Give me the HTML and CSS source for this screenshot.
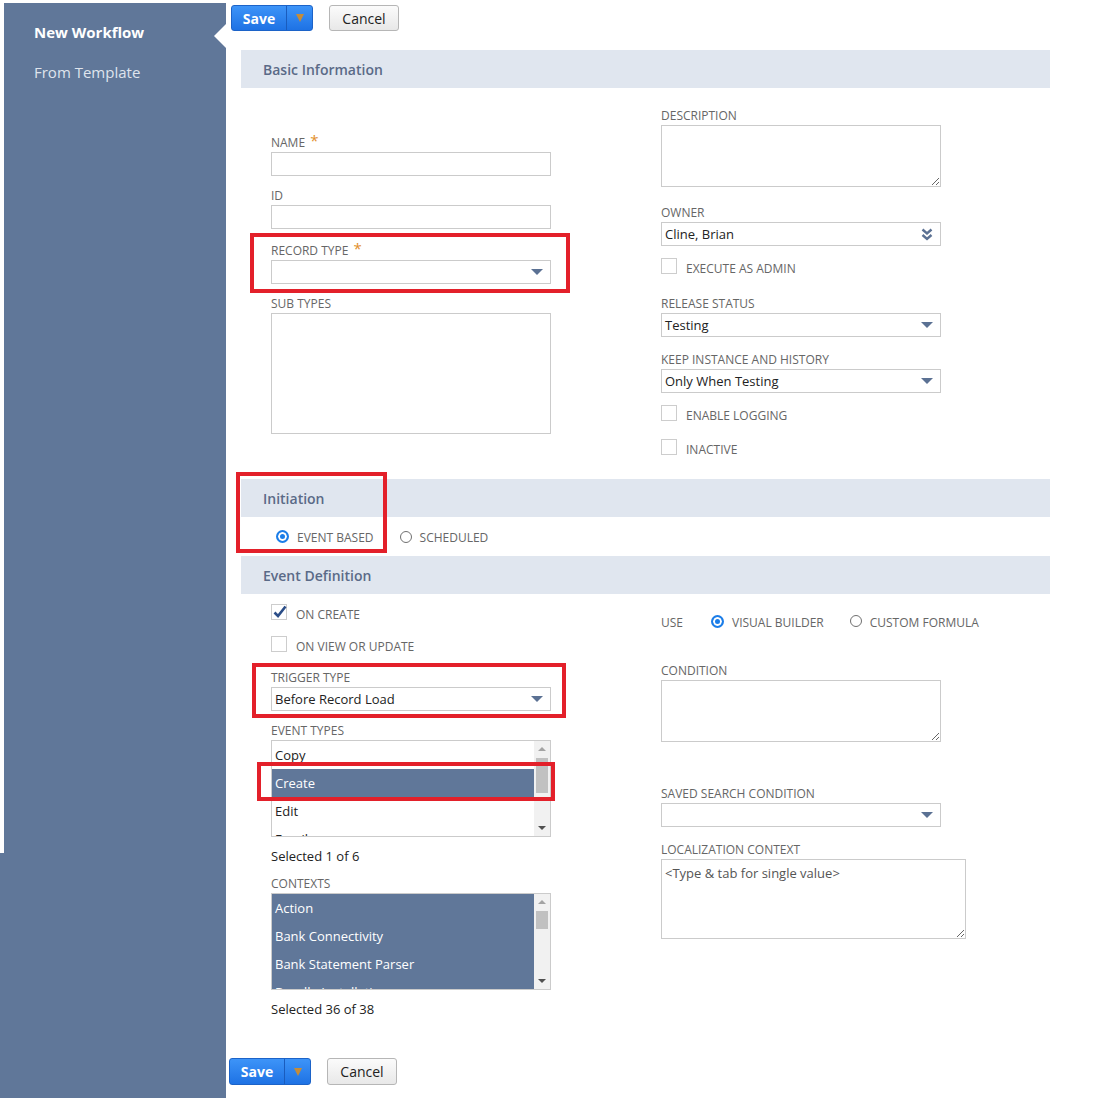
FILE: index.html
```html
<!DOCTYPE html>
<html lang="en">
<head>
  <meta charset="UTF-8">
  <meta name="viewport" content="width=device-width, initial-scale=1.0">
  <title>New Workflow</title>
  <link rel="stylesheet" href="styles.css">
</head>
<body>

<div class="page">
  <!-- Sidebar -->
  <aside class="sidebar">
    <nav class="side-nav">
      <a class="side-link active">New Workflow</a>
      <a class="side-link">From Template</a>
    </nav>
    <div class="side-fill"></div>
  </aside>

  <main class="main">
    <div class="btn-row">
      <div class="btn-split">
        <button class="btn-save">Save</button>
        <button class="btn-menu"><span class="caret"></span></button>
      </div>
      <button class="btn-cancel">Cancel</button>
    </div>

    <!-- Basic Information -->
    <section class="section">
      <div class="section-head">Basic Information</div>
      <div class="form-grid basic">
        <div class="col col-left">
          <div class="field">
            <label class="lbl req-lbl">NAME <span class="req">*</span></label>
            <input type="text" class="txt">
          </div>
          <div class="field">
            <label class="lbl">ID</label>
            <input type="text" class="txt">
          </div>
          <div class="field">
            <label class="lbl req-lbl">RECORD TYPE <span class="req">*</span></label>
            <div class="select"><span class="value"></span><span class="arrow"></span></div>
          </div>
          <div class="field">
            <label class="lbl">SUB TYPES</label>
            <div class="multi"></div>
          </div>
        </div>

        <div class="col col-right">
          <div class="field area-field">
            <label class="lbl">DESCRIPTION</label>
            <textarea class="area"></textarea>
          </div>
          <div class="field">
            <label class="lbl">OWNER</label>
            <div class="select">
              <span class="value">Cline, Brian</span>
              <svg class="chevrons" width="12" height="13" viewBox="0 0 12 13">
                <path d="M1.5 1.5 L6 5.5 L10.5 1.5" fill="none" stroke="#5b7193" stroke-width="2.4"/>
                <path d="M1.5 7 L6 11 L10.5 7" fill="none" stroke="#5b7193" stroke-width="2.4"/>
              </svg>
            </div>
          </div>
          <div class="check-row loose">
            <span class="check"></span>
            <span class="check-text">EXECUTE AS ADMIN</span>
          </div>
          <div class="field spaced">
            <label class="lbl">RELEASE STATUS</label>
            <div class="select"><span class="value">Testing</span><span class="arrow"></span></div>
          </div>
          <div class="field">
            <label class="lbl">KEEP INSTANCE AND HISTORY</label>
            <div class="select"><span class="value">Only When Testing</span><span class="arrow"></span></div>
          </div>
          <div class="check-row">
            <span class="check"></span>
            <span class="check-text">ENABLE LOGGING</span>
          </div>
          <div class="check-row">
            <span class="check"></span>
            <span class="check-text">INACTIVE</span>
          </div>
        </div>
      </div>
    </section>

    <!-- Initiation -->
    <section class="section">
      <div class="section-head">Initiation</div>
      <div class="radio-row init">
        <span class="radio on"></span><span class="radio-text">EVENT BASED</span>
        <span class="radio"></span><span class="radio-text">SCHEDULED</span>
      </div>
    </section>

    <!-- Event Definition -->
    <section class="section">
      <div class="section-head">Event Definition</div>
      <div class="form-grid event">
        <div class="col col-left">
          <div class="check-row tight">
            <span class="check checked">
              <svg width="16" height="16" viewBox="0 0 16 16"><path d="M2.5 8.5 L6 12 L13.5 2.5" fill="none" stroke="#2b4d87" stroke-width="2.6"/></svg>
            </span>
            <span class="check-text">ON CREATE</span>
          </div>
          <div class="check-row">
            <span class="check"></span>
            <span class="check-text">ON VIEW OR UPDATE</span>
          </div>
          <div class="field">
            <label class="lbl">TRIGGER TYPE</label>
            <div class="select"><span class="value">Before Record Load</span><span class="arrow"></span></div>
          </div>
          <div class="field list-field">
            <label class="lbl">EVENT TYPES</label>
            <div class="listbox">
              <div class="list-items">
                <div class="item">Copy</div>
                <div class="item selected">Create</div>
                <div class="item">Edit</div>
                <div class="item">Email</div>
              </div>
              <div class="scrollbar">
                <span class="sb-up"></span>
                <span class="sb-thumb event-thumb"></span>
                <span class="sb-down"></span>
              </div>
            </div>
            <p class="note">Selected 1 of 6</p>
          </div>
          <div class="field list-field">
            <label class="lbl">CONTEXTS</label>
            <div class="listbox">
              <div class="list-items">
                <div class="item selected">Action</div>
                <div class="item selected">Bank Connectivity</div>
                <div class="item selected">Bank Statement Parser</div>
                <div class="item selected">Bundle Installation</div>
              </div>
              <div class="scrollbar">
                <span class="sb-up"></span>
                <span class="sb-thumb ctx-thumb"></span>
                <span class="sb-down"></span>
              </div>
            </div>
            <p class="note">Selected 36 of 38</p>
          </div>
        </div>

        <div class="col col-right">
          <div class="radio-row use">
            <span class="use-lbl">USE</span>
            <span class="radio on"></span><span class="radio-text">VISUAL BUILDER</span>
            <span class="radio"></span><span class="radio-text">CUSTOM FORMULA</span>
          </div>
          <div class="field cond-field">
            <label class="lbl">CONDITION</label>
            <textarea class="area"></textarea>
          </div>
          <div class="field spaced">
            <label class="lbl">SAVED SEARCH CONDITION</label>
            <div class="select"><span class="value"></span><span class="arrow"></span></div>
          </div>
          <div class="field">
            <label class="lbl">LOCALIZATION CONTEXT</label>
            <textarea class="area wide">&lt;Type &amp; tab for single value&gt;</textarea>
          </div>
        </div>
      </div>
    </section>

    <div class="btn-row bottom">
      <div class="btn-split">
        <button class="btn-save">Save</button>
        <button class="btn-menu"><span class="caret"></span></button>
      </div>
      <button class="btn-cancel">Cancel</button>
    </div>
  </main>

  <!-- Highlight annotations -->
  <div class="mark mark-record"></div>
  <div class="mark mark-init"></div>
  <div class="mark mark-trigger"></div>
  <div class="mark mark-create"></div>
</div>

</body>
</html>
```

FILE: styles.css
```css
/* Basic Styles */
* {
  box-sizing: border-box;
}
body {
  font-family: "Open Sans", Arial, sans-serif;
  margin: 0;
  padding: 0;
  background-color: #fff;
  color: #222;
}
.page {
  position: relative;
  display: flex;
  min-height: 1098px;
}

/* Sidebar */
.sidebar {
  width: 226px;
  flex-shrink: 0;
  display: flex;
  flex-direction: column;
}
.side-nav {
  margin: 3px 0 0 4px;
  height: 850px;
  padding-top: 9px;
  background-color: #607799;
}
.side-link {
  position: relative;
  display: block;
  padding-left: 30px;
  font-size: 15px;
  line-height: 40px;
  color: #dfe4ed;
}
.side-link.active {
  color: #fff;
  font-weight: 700;
}
.side-link.active::after {
  content: "";
  position: absolute;
  right: 0;
  top: 12px;
  border-top: 12px solid transparent;
  border-bottom: 12px solid transparent;
  border-right: 12px solid #fff;
}
.side-fill {
  flex: 1;
  background-color: #607799;
}

/* Main */
.main {
  flex: 1;
  padding-top: 5px;
}
.btn-row {
  display: flex;
  gap: 16px;
  margin-left: 5px;
}
.btn-row.bottom {
  margin: 29px 0 0 3px;
}
.btn-split {
  display: flex;
  width: 82px;
  height: 26px;
  border: 1px solid #1c63c8;
  border-radius: 3px;
  overflow: hidden;
  background: linear-gradient(#3d94f8, #1e72e4);
}
.bottom .btn-split,
.bottom .btn-cancel {
  height: 27px;
}
.btn-save {
  width: 55px;
  border: none;
  border-right: 1px solid #1a5cbd;
  background: transparent;
  color: #fff;
  font-family: inherit;
  font-size: 14px;
  font-weight: 700;
  padding: 0;
}
.btn-menu {
  flex: 1;
  border: none;
  background: transparent;
  padding: 0;
  display: flex;
  align-items: center;
  justify-content: center;
}
.caret {
  border-left: 4px solid transparent;
  border-right: 4px solid transparent;
  border-top: 8px solid #c48c3a;
}
.btn-cancel {
  width: 70px;
  height: 26px;
  border: 1px solid #b6b6b6;
  border-radius: 3px;
  background: linear-gradient(#fbfbfb, #e8e8e8);
  color: #222;
  font-family: inherit;
  font-size: 14px;
  padding: 0;
}

/* Sections */
.section {
  margin-left: 15px;
  width: 809px;
}
.section:first-of-type {
  margin-top: 19px;
}
.section-head {
  height: 38px;
  line-height: 40px;
  padding-left: 22px;
  background-color: #e0e6ef;
  color: #5a6a87;
  font-size: 14px;
  font-weight: 600;
}
.form-grid {
  display: grid;
  grid-template-columns: 390px 1fr;
  padding-left: 30px;
}
.col > :last-child {
  margin-bottom: 0;
}
.basic {
  padding-bottom: 20px;
}
.basic .col-left {
  padding-top: 45px;
}
.basic .col-right {
  padding-top: 20px;
}
.event .col-left {
  padding-top: 10px;
}
.event .col-right {
  padding-top: 18px;
}

/* Fields */
.field {
  margin-bottom: 12px;
}
.field.spaced {
  margin-bottom: 15px;
}
.field.area-field {
  margin-bottom: 18px;
}
.field.cond-field {
  margin-bottom: 44px;
}
.field.list-field {
  margin-bottom: 0;
}
.lbl {
  display: block;
  height: 16px;
  line-height: 16px;
  margin-bottom: 1px;
  font-size: 12px;
  color: #666;
}
.lbl.req-lbl {
  height: 18px;
  line-height: 20px;
}
.req {
  color: #e28f2c;
  font-size: 15px;
  vertical-align: top;
  line-height: 14px;
  margin-left: 2px;
}
.txt,
.select,
.multi,
.area,
.listbox {
  display: block;
  width: 280px;
  border: 1px solid #cbcbcb;
  background-color: #fff;
}
.txt {
  height: 24px;
}
.select {
  position: relative;
  height: 24px;
  padding-left: 3px;
  font-size: 13px;
  line-height: 23px;
  color: #222;
}
.arrow {
  position: absolute;
  right: 7px;
  top: 8px;
  border-left: 6px solid transparent;
  border-right: 6px solid transparent;
  border-top: 6px solid #5b7193;
}
.chevrons {
  position: absolute;
  right: 7px;
  top: 5px;
}
.multi {
  height: 121px;
}
.area {
  height: 62px;
  padding: 4px 3px;
  font-family: inherit;
  font-size: 13px;
  line-height: 18px;
  color: #555;
  resize: both;
  margin: 0;
}
.area.wide {
  width: 305px;
  height: 80px;
}

/* Checkboxes */
.check-row {
  display: flex;
  height: 20px;
  margin-bottom: 14px;
}
.check-row.loose {
  margin-bottom: 18px;
}
.check-row.tight {
  margin-bottom: 12px;
}
.check {
  width: 16px;
  height: 16px;
  border: 1px solid #cdcdcd;
  background-color: #fff;
  position: relative;
}
.check svg {
  position: absolute;
  left: 0;
  top: -1px;
}
.check-text {
  margin: 3px 0 0 9px;
  font-size: 12px;
  line-height: 16px;
  color: #666;
}

/* Radios */
.radio-row {
  display: flex;
  align-items: center;
  font-size: 12px;
  color: #666;
}
.radio-row.init {
  height: 39px;
  padding: 2px 0 0 35px;
}
.radio-row.use {
  height: 20px;
  margin-bottom: 31px;
}
.use-lbl {
  width: 50px;
}
.radio {
  width: 12px;
  height: 12px;
  border-radius: 50%;
  border: 1px solid #707070;
  background-color: #fff;
  margin-top: -2px;
}
.radio.on {
  width: 13px;
  height: 13px;
  border: 2px solid #1b7de8;
  background-color: #1b7de8;
  box-shadow: inset 0 0 0 2px #fff;
}
.radio-text {
  margin: 0 26px 0 8px;
}

/* List boxes */
.listbox {
  display: flex;
  height: 97px;
  overflow: hidden;
}
.list-items {
  flex: 1;
  overflow: hidden;
}
.item {
  height: 28px;
  line-height: 29px;
  padding-left: 3px;
  font-size: 13px;
  color: #222;
  white-space: nowrap;
}
.item.selected {
  background-color: #607799;
  color: #fff;
}
.scrollbar {
  position: relative;
  width: 16px;
  background-color: #f1f1f1;
}
.sb-up,
.sb-down {
  position: absolute;
  left: 4px;
  border-left: 4px solid transparent;
  border-right: 4px solid transparent;
}
.sb-up {
  top: 6px;
  border-bottom: 4px solid #a3a3a3;
}
.sb-down {
  bottom: 6px;
  border-top: 4px solid #505050;
}
.sb-thumb {
  position: absolute;
  left: 2px;
  width: 12px;
  background-color: #c1c1c1;
}
.event-thumb {
  top: 17px;
  height: 35px;
}
.ctx-thumb {
  top: 17px;
  height: 18px;
}
.note {
  margin: 10px 0 11px;
  font-size: 13px;
  line-height: 18px;
  color: #222;
}

/* Red highlight annotations */
.mark {
  position: absolute;
  border: 4px solid #e3202a;
  pointer-events: none;
}
.mark-record {
  left: 250px;
  top: 233px;
  width: 320px;
  height: 60px;
}
.mark-init {
  left: 236px;
  top: 472px;
  width: 151px;
  height: 81px;
}
.mark-trigger {
  left: 252px;
  top: 663px;
  width: 314px;
  height: 55px;
}
.mark-create {
  left: 257px;
  top: 762px;
  width: 298px;
  height: 39px;
}
```
